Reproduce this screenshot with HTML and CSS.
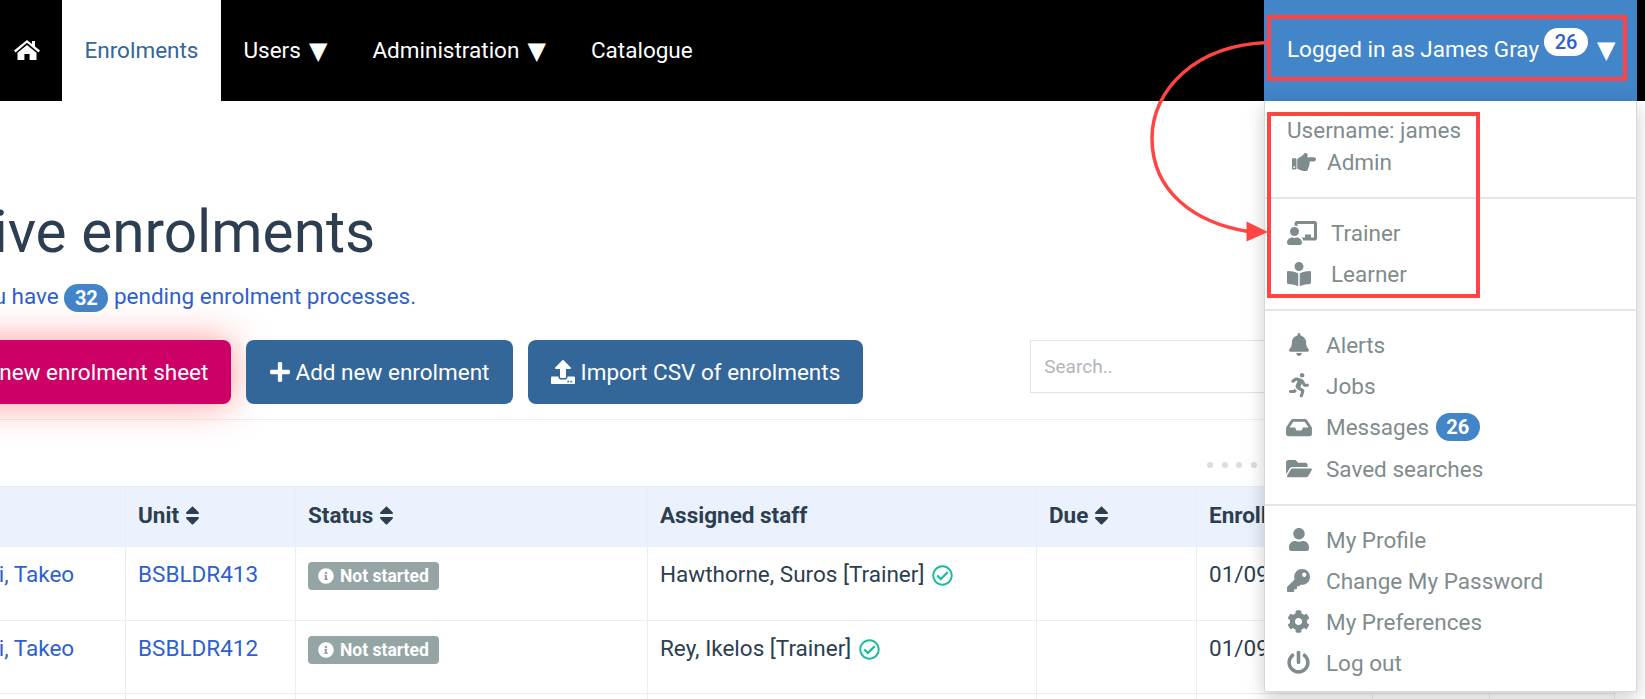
FILE: index.html
```html
<!DOCTYPE html>
<html lang="en">
<head>
<meta charset="utf-8">
<title>Active enrolments</title>
<link rel="stylesheet" href="styles.css">
</head>
<body>
<svg class="sprite" width="0" height="0" aria-hidden="true">
  <symbol id="i-point" viewBox="0 0 512 512"><path d="M512 199.652c0 23.625-20.65 43.826-44.8 43.826h-99.851c16.34 17.048 18.346 49.766-6.299 70.944 14.288 22.829 2.147 53.017-16.45 62.315C353.574 425.878 322.654 448 272 448c-2.746 0-13.276-.203-16-.195-61.971.168-76.894-31.065-123.731-38.315C120.596 407.683 112 397.599 112 385.786V214.261l.002-.001c.011-18.366 10.607-35.889 28.464-43.845 28.886-12.994 95.413-49.038 107.534-77.323 7.797-18.194 21.384-29.084 40-29.092 34.222-.014 57.752 35.098 44.119 66.908-3.583 8.359-8.312 16.67-14.153 24.918H467.2c23.45 0 44.8 20.543 44.8 43.826zM96 200v192c0 13.255-10.745 24-24 24H24c-13.255 0-24-10.745-24-24V200c0-13.255 10.745-24 24-24h48c13.255 0 24 10.745 24 24zM68 368c0-11.046-8.954-20-20-20s-20 8.954-20 20 8.954 20 20 20 20-8.954 20-20z"/></symbol>
  <symbol id="i-teacher" viewBox="0 0 640 512"><path d="M208 352c-2.39 0-4.78.35-7.06 1.09C187.98 357.3 174.35 360 160 360c-14.35 0-27.98-2.7-40.95-6.91-2.28-.74-4.66-1.09-7.05-1.09C49.94 352-.33 402.48 0 464.62.14 490.88 21.73 512 48 512h224c26.27 0 47.86-21.12 48-47.38.33-62.14-49.94-112.62-112-112.62zm-48-32c53.02 0 96-42.98 96-96s-42.98-96-96-96-96 42.98-96 96 42.98 96 96 96zM592 0H208c-26.47 0-48 22.25-48 49.59V96c23.42 0 45.1 6.78 64 17.8V64h352v288h-64v-64H384v64h-76.24c19.1 16.69 33.12 38.73 39.69 64H592c26.47 0 48-22.25 48-49.59V49.59C640 22.25 618.47 0 592 0z"/></symbol>
  <symbol id="i-reader" viewBox="0 0 512 512"><path d="M352 96c0-53.02-42.98-96-96-96s-96 42.98-96 96 42.98 96 96 96 96-42.98 96-96zM233.59 241.1c-59.33-36.32-155.43-46.3-203.79-49.05C13.55 191.13 0 203.51 0 219.14v222.8c0 14.33 11.59 26.28 26.49 27.05 43.66 2.29 131.99 10.68 193.04 41.43 9.37 4.72 20.48-1.71 20.48-11.87V252.56c-.01-4.67-2.32-8.95-6.42-11.46zm248.61-49.05c-48.35 2.74-144.46 12.73-203.78 49.05-4.1 2.51-6.41 6.96-6.41 11.63v245.79c0 10.19 11.14 16.63 20.54 11.9 61.04-30.72 149.32-39.11 192.97-41.4 14.9-.78 26.49-12.73 26.49-27.06V219.14c-.01-15.63-13.56-28.01-29.81-27.09z"/></symbol>
  <symbol id="i-bell" viewBox="0 0 448 512"><path d="M224 512c35.32 0 63.97-28.65 63.97-64H160.03c0 35.35 28.65 64 63.97 64zm215.39-149.71c-19.32-20.76-55.47-51.99-55.47-154.29 0-77.7-54.48-139.9-127.94-155.16V32c0-17.67-14.32-32-31.98-32s-31.98 14.33-31.98 32v20.84C118.56 68.1 64.08 130.3 64.08 208c0 102.3-36.15 133.53-55.47 154.29-6 6.45-8.66 14.16-8.61 21.71.11 16.4 12.98 32 32.1 32h383.8c19.12 0 32-15.6 32.1-32 .05-7.55-2.61-15.27-8.61-21.71z"/></symbol>
  <symbol id="i-run" viewBox="0 0 416 512"><path d="M272 96c26.51 0 48-21.49 48-48S298.51 0 272 0s-48 21.49-48 48 21.49 48 48 48zM113.69 317.47l-14.8 34.52H32c-17.67 0-32 14.33-32 32s14.33 32 32 32h77.45c19.25 0 36.58-11.44 44.11-29.09l8.79-20.52-10.67-6.3c-17.32-10.23-30.06-25.37-37.99-42.61zM384 223.99h-44.03l-26.06-53.25c-12.5-25.55-35.45-44.23-61.78-50.94l-71.08-21.14c-28.3-6.8-57.77-.55-80.84 17.14l-39.67 30.41c-14.03 10.75-16.69 30.83-5.92 44.86s30.84 16.66 44.86 5.92l39.69-30.41c7.67-5.89 17.44-8 25.27-6.14l14.7 4.37-37.46 87.39c-12.62 29.48-1.31 64.01 26.3 80.31l84.98 50.17-27.47 87.73c-5.28 16.86 4.11 34.81 20.97 40.09 3.19 1 6.41 1.48 9.58 1.48 13.61 0 26.23-8.77 30.52-22.45l31.64-101.06c5.91-20.77-2.89-43.08-21.64-54.39l-61.24-36.14 31.31-78.28 20.27 41.43c8 16.34 24.92 26.89 43.11 26.89H384c17.67 0 32-14.33 32-32s-14.33-31.99-32-31.99z"/></symbol>
  <symbol id="i-inbox" viewBox="0 0 576 512"><path d="M567.938 243.908L462.25 85.374A48.003 48.003 0 0 0 422.311 64H153.689a48 48 0 0 0-39.938 21.374L8.062 243.908A47.994 47.994 0 0 0 0 270.533V400c0 26.51 21.49 48 48 48h480c26.51 0 48-21.49 48-48V270.533a47.994 47.994 0 0 0-8.062-26.625zM162.252 128h251.497l85.333 128H376l-32 64H232l-32-64H76.918l85.334-128z"/></symbol>
  <symbol id="i-folder" viewBox="0 0 576 512"><path d="M572.694 292.093L500.27 416.248A63.997 63.997 0 0 1 444.989 448H45.025c-18.523 0-30.064-20.093-20.731-36.093l72.424-124.155A64 64 0 0 1 152 256h399.964c18.523 0 30.064 20.093 20.73 36.093zM152 224h328v-48c0-26.51-21.49-48-48-48H272l-64-64H48C21.49 64 0 85.49 0 112v278.046l69.077-118.418C86.214 242.25 117.989 224 152 224z"/></symbol>
  <symbol id="i-user" viewBox="0 0 448 512"><path d="M224 256c70.7 0 128-57.3 128-128S294.7 0 224 0 96 57.3 96 128s57.3 128 128 128zm89.6 32h-16.7c-22.2 10.2-46.9 16-72.9 16s-50.6-5.8-72.9-16h-16.7C60.2 288 0 348.2 0 422.4V464c0 26.5 21.5 48 48 48h352c26.5 0 48-21.5 48-48v-41.6c0-74.2-60.2-134.4-134.4-134.4z"/></symbol>
  <symbol id="i-key" viewBox="0 0 512 512"><path d="M512 176.001C512 273.203 433.202 352 336 352c-11.22 0-22.19-1.062-32.827-3.069l-24.012 27.014A23.999 23.999 0 0 1 261.223 384H224v40c0 13.255-10.745 24-24 24h-40v40c0 13.255-10.745 24-24 24H24c-13.255 0-24-10.745-24-24v-78.059c0-6.365 2.529-12.47 7.029-16.971l161.802-161.802C163.108 213.814 160 195.271 160 176 160 78.798 238.797.001 335.999 0 433.488-.001 512 78.511 512 176.001zM336 128c0 26.51 21.49 48 48 48s48-21.49 48-48-21.49-48-48-48-48 21.49-48 48z"/></symbol>
  <symbol id="i-cog" viewBox="0 0 512 512"><path d="M487.4 315.7l-42.6-24.6c4.3-23.2 4.3-47 0-70.2l42.6-24.6c4.9-2.8 7.1-8.6 5.5-14-11.1-35.6-30-67.8-54.7-94.6-3.8-4.1-10-5.1-14.8-2.3L380.8 110c-17.9-15.4-38.5-27.3-60.8-35.1V25.8c0-5.6-3.9-10.5-9.4-11.7-36.7-8.2-74.3-7.8-109.2 0-5.5 1.2-9.4 6.1-9.4 11.7V75c-22.2 7.9-42.8 19.8-60.8 35.1L88.7 85.5c-4.9-2.8-11-1.9-14.8 2.3-24.7 26.7-43.6 58.9-54.7 94.6-1.7 5.4.6 11.2 5.5 14L67.3 221c-4.3 23.2-4.3 47 0 70.2l-42.6 24.6c-4.9 2.8-7.1 8.6-5.5 14 11.1 35.6 30 67.8 54.7 94.6 3.8 4.1 10 5.1 14.8 2.3l42.6-24.6c17.9 15.4 38.5 27.3 60.8 35.1v49.2c0 5.6 3.9 10.5 9.4 11.7 36.7 8.2 74.3 7.8 109.2 0 5.5-1.2 9.4-6.1 9.4-11.7v-49.2c22.2-7.9 42.8-19.8 60.8-35.1l42.6 24.6c4.9 2.8 11 1.9 14.8-2.3 24.7-26.7 43.6-58.9 54.7-94.6 1.5-5.5-.7-11.3-5.6-14.1zM256 336c-44.1 0-80-35.9-80-80s35.9-80 80-80 80 35.9 80 80-35.9 80-80 80z"/></symbol>
  <symbol id="i-power" viewBox="0 0 512 512"><path d="M400 54.1c63 45 104 118.6 104 201.9 0 136.8-110.8 247.7-247.5 248C120 504.3 8.2 393 8 256.4 7.9 173.1 48.9 99.3 111.8 54.2c11.7-8.3 28-4.8 35 7.7L162.6 90c5.9 10.5 3.1 23.8-6.6 31-41.5 30.8-68 79.6-68 134.9-.1 92.3 74.5 168.1 168 168.1 91.6 0 168.6-74.2 168-169.1-.3-51.8-24.7-101.8-68.1-134-9.7-7.2-12.4-20.5-6.5-30.9l15.8-28.1c7-12.4 23.2-16.1 34.8-7.8zM296 264V24c0-13.3-10.7-24-24-24h-32c-13.3 0-24 10.7-24 24v240c0 13.3 10.7 24 24 24h32c13.3 0 24-10.7 24-24z"/></symbol>
  <symbol id="i-plus" viewBox="0 0 448 512"><path d="M416 208H272V64c0-17.67-14.33-32-32-32h-32c-17.67 0-32 14.33-32 32v144H32c-17.67 0-32 14.33-32 32v32c0 17.67 14.33 32 32 32h144v144c0 17.67 14.33 32 32 32h32c17.67 0 32-14.33 32-32V304h144c17.67 0 32-14.33 32-32v-32c0-17.67-14.33-32-32-32z"/></symbol>
  <symbol id="i-upload" viewBox="0 0 512 512"><path d="M296 384h-80c-13.3 0-24-10.7-24-24V192h-87.7c-17.8 0-26.7-21.5-14.1-34.1L242.3 5.7c7.5-7.5 19.8-7.5 27.3 0l152.2 152.2c12.6 12.6 3.7 34.1-14.1 34.1H320v168c0 13.3-10.7 24-24 24zm216-8v112c0 13.3-10.7 24-24 24H24c-13.3 0-24-10.7-24-24V376c0-13.3 10.7-24 24-24h136v8c0 30.9 25.1 56 56 56h80c30.9 0 56-25.1 56-56v-8h136c13.3 0 24 10.7 24 24zm-124 88c0-11-9-20-20-20s-20 9-20 20 9 20 20 20 20-9 20-20zm64 0c0-11-9-20-20-20s-20 9-20 20 9 20 20 20 20-9 20-20z"/></symbol>
  <symbol id="i-info" viewBox="0 0 512 512"><path d="M256 8C119.043 8 8 119.083 8 256c0 136.997 111.043 248 248 248s248-111.003 248-248C504 119.083 392.957 8 256 8zm0 110c23.196 0 42 18.804 42 42s-18.804 42-42 42-42-18.804-42-42 18.804-42 42-42zm56 254c0 6.627-5.373 12-12 12h-88c-6.627 0-12-5.373-12-12v-24c0-6.627 5.373-12 12-12h12v-64h-12c-6.627 0-12-5.373-12-12v-24c0-6.627 5.373-12 12-12h64c6.627 0 12 5.373 12 12v100h12c6.627 0 12 5.373 12 12v24z"/></symbol>
  <symbol id="i-sort" viewBox="0 0 320 512"><path d="M41 288h238c21.4 0 32.1 25.9 17 41L177 448c-9.4 9.4-24.6 9.4-33.9 0L24 329c-15.1-15.1-4.4-41 17-41zm255-105L177 64c-9.4-9.4-24.6-9.4-33.9 0L24 183c-15.1 15.1-4.4 41 17 41h238c21.4 0 32.1-25.9 17-41z"/></symbol>
  <symbol id="i-check" viewBox="0 0 512 512"><path d="M256 8C119.033 8 8 119.033 8 256s111.033 248 248 248 248-111.033 248-248S392.967 8 256 8zm0 48c110.532 0 200 89.451 200 200 0 110.532-89.451 200-200 200-110.532 0-200-89.451-200-200 0-110.532 89.451-200 200-200m140.204 130.267l-22.536-22.718c-4.667-4.705-12.265-4.736-16.97-.068L215.346 303.697l-59.792-60.277c-4.667-4.705-12.265-4.736-16.97-.069l-22.719 22.536c-4.705 4.667-4.736 12.265-.068 16.971l90.781 91.516c4.667 4.705 12.265 4.736 16.97.068l172.589-171.204c4.704-4.668 4.734-12.266.067-16.971z"/></symbol>
</svg>

<nav class="topnav">
  <a class="nav-home" href="#" aria-label="Home">
    <svg class="home-icon" viewBox="0 0 26 21"><path d="M13 1 L18 5 V2 H21 V7.4 L26 11.6 L24.4 13.4 L13 3.8 L1.6 13.4 L0 11.6 Z"/><path d="M13 6 L22.5 13.8 V21 H15.6 V15 H10.4 V21 H3.5 V13.8 Z"/></svg>
  </a>
  <a class="nav-link is-active" href="#">Enrolments</a>
  <a class="nav-link" href="#">Users <span class="caret">▼</span></a>
  <a class="nav-link" href="#">Administration <span class="caret">▼</span></a>
  <a class="nav-link" href="#">Catalogue</a>
  <div class="nav-user">
    <a class="user-toggle" href="#">
      <span>Logged in as James Gray</span>
      <span class="pill pill-white">26</span>
      <span class="caret caret-user">▼</span>
    </a>
    <div class="user-menu">
      <div class="callout"></div>
      <div class="menu-group group-id">
        <div class="username">Username: james</div>
        <a class="role role-admin" href="#"><svg class="ic ic-point"><use href="#i-point"/></svg>Admin</a>
      </div>
      <div class="menu-group group-roles">
        <a class="role role-trainer" href="#"><svg class="ic ic-teacher"><use href="#i-teacher"/></svg>Trainer</a>
        <a class="role role-learner" href="#"><svg class="ic ic-reader"><use href="#i-reader"/></svg>Learner</a>
      </div>
      <div class="menu-group group-tools">
        <a class="item" href="#"><span class="ic-box"><svg class="ic ic-20"><use href="#i-bell"/></svg></span>Alerts</a>
        <a class="item" href="#"><span class="ic-box"><svg class="ic ic-run"><use href="#i-run"/></svg></span>Jobs</a>
        <a class="item item-msg" href="#"><span class="ic-box"><svg class="ic ic-wide"><use href="#i-inbox"/></svg></span>Messages <span class="pill pill-blue pill-menu">26</span></a>
        <a class="item" href="#"><span class="ic-box"><svg class="ic ic-wide"><use href="#i-folder"/></svg></span>Saved searches</a>
      </div>
      <div class="menu-group group-last">
        <a class="item" href="#"><span class="ic-box"><svg class="ic ic-20"><use href="#i-user"/></svg></span>My Profile</a>
        <a class="item" href="#"><span class="ic-box"><svg class="ic ic-24"><use href="#i-key"/></svg></span>Change My Password</a>
        <a class="item" href="#"><span class="ic-box"><svg class="ic ic-24"><use href="#i-cog"/></svg></span>My Preferences</a>
        <a class="item" href="#"><span class="ic-box"><svg class="ic ic-24"><use href="#i-power"/></svg></span>Log out</a>
      </div>
    </div>
  </div>
</nav>

<main class="content">
  <h1 class="title">Active enrolments</h1>
  <p class="lead">You have <span class="pill pill-blue">32</span> pending enrolment processes.</p>
  <div class="toolbar">
    <a class="btn btn-pink" href="#"><svg class="btn-ic"><use href="#i-plus"/></svg> Add new enrolment sheet</a>
    <a class="btn btn-blue btn-add" href="#"><svg class="btn-ic"><use href="#i-plus"/></svg> Add new enrolment</a>
    <a class="btn btn-blue" href="#"><svg class="btn-ic btn-ic-up"><use href="#i-upload"/></svg> Import CSV of enrolments</a>
    <input class="search" type="text" placeholder="Search..">
  </div>
  <div class="dots"><i></i><i></i><i></i><i></i></div>
  <table class="grid">
    <colgroup>
      <col class="c1"><col class="c2"><col class="c3"><col class="c4"><col class="c5"><col class="c6"><col class="c7"><col class="c8">
    </colgroup>
    <thead>
      <tr>
        <th></th>
        <th>Unit <svg class="sort"><use href="#i-sort"/></svg></th>
        <th>Status <svg class="sort"><use href="#i-sort"/></svg></th>
        <th>Assigned staff</th>
        <th>Due <svg class="sort"><use href="#i-sort"/></svg></th>
        <th>Enrolled</th>
        <th></th>
        <th></th>
      </tr>
    </thead>
    <tbody>
      <tr>
        <td class="learner"><a href="#">Kawasaki, Takeo</a></td>
        <td><a href="#">BSBLDR413</a></td>
        <td><span class="status"><svg class="status-ic"><use href="#i-info"/></svg>Not started</span></td>
        <td>Hawthorne, Suros [Trainer] <svg class="ok"><use href="#i-check"/></svg></td>
        <td></td>
        <td>01/09/2021</td>
        <td></td>
        <td></td>
      </tr>
      <tr class="row-b">
        <td class="learner"><a href="#">Kawasaki, Takeo</a></td>
        <td><a href="#">BSBLDR412</a></td>
        <td><span class="status"><svg class="status-ic"><use href="#i-info"/></svg>Not started</span></td>
        <td>Rey, Ikelos [Trainer] <svg class="ok"><use href="#i-check"/></svg></td>
        <td></td>
        <td>01/09/2021</td>
        <td></td>
        <td></td>
      </tr>
      <tr>
        <td></td><td></td><td></td><td></td><td></td><td></td><td></td><td></td>
      </tr>
    </tbody>
  </table>
</main>

<svg class="annot" viewBox="0 0 1645 699" aria-hidden="true">
  <path class="annot-line" d="M1268 42.5 C1195 45 1152 90 1152 138 C1152 192 1195 223 1248 231.5"/>
  <path class="annot-head" d="M1246.5 221.5 L1268 232 L1246.5 241.5 Z"/>
</svg>
</body>
</html>
```

FILE: styles.css
```css
* { box-sizing: border-box; }
html, body { margin: 0; height: 699px; overflow: hidden; }
body {
  position: relative;
  font-family: Roboto, "Liberation Sans", sans-serif;
  font-size: 22.5px;
  color: #2c3e50;
  background: #fff;
}
a { text-decoration: none; color: inherit; }
.sprite { position: absolute; }

/* top nav */
.topnav {
  position: relative;
  z-index: 5;
  display: flex;
  height: 101px;
  background: #000;
  color: #fff;
}
.nav-home { display: flex; align-items: center; width: 62px; padding-left: 14px; padding-bottom: 2px; }
.home-icon { width: 26px; height: 21px; fill: #fff; }
.nav-link { display: flex; align-items: center; padding: 0 22.5px 2px; white-space: pre; }
.nav-link.is-active { background: #fff; color: #336699; }
.caret { margin-left: 2.5px; padding-top: 2px; font-family: "DejaVu Sans", sans-serif; font-size: 24px; line-height: 1; }
.caret-user { margin-left: 0; }

.nav-user { position: relative; width: 373px; margin-left: auto; margin-right: 8px; background: #4285c8; }
.user-toggle {
  display: flex;
  align-items: center;
  height: 66px;
  margin: 15px 10px 0 3px;
  padding: 2px 0 0 16px;
  border: 4px solid #ff4444;
}
.pill {
  display: inline-block;
  min-width: 44px;
  height: 28px;
  padding: 0 10px;
  border-radius: 14px;
  font-size: 20px;
  font-weight: 700;
  line-height: 28px;
  text-align: center;
}
.pill-white { background: #fff; color: #2e5fcf; margin: 0 9px 14px 5px; font-weight: 500; }
.pill-blue { background: #4285c8; color: #fff; vertical-align: -1px; }

/* user menu */
.user-menu {
  position: absolute;
  top: 100%;
  left: 0;
  width: 373px;
  height: 591px;
  background: #fff;
  border: 1px solid #d8d8d8;
  border-top: 0;
  box-shadow: 0 6px 18px rgba(0,0,0,.2);
  color: #7f8c8d;
}
.callout {
  position: absolute;
  left: 2px;
  top: 11px;
  width: 213px;
  height: 186px;
  border: 4px solid #ff4444;
  z-index: 1;
}
.menu-group { border-bottom: 2px solid #e5e5e5; }
.group-id { height: 98px; padding: 13px 0 0 22px; }
.group-roles { padding: 13px 0 15px; }
.group-tools { padding: 13px 0 15px; }
.group-last { border-bottom: 0; padding-top: 13px; }
.username { height: 32px; line-height: 32px; }
.role, .item { display: flex; align-items: center; height: 41px; white-space: pre; }
.item-msg { height: 42px; }
.role-admin { height: 32px; padding-left: 5px; }
.ic { fill: #7f8c8d; flex: none; }
.ic-point { width: 24px; height: 24px; margin-right: 11px; }
.role-trainer { padding-left: 22px; }
.ic-teacher { width: 30px; height: 24px; margin-right: 14px; }
.role-learner { padding-left: 22px; }
.ic-reader { width: 24px; height: 24px; margin-right: 20px; }
.item { padding-left: 19px; }
.ic-box { display: flex; justify-content: center; width: 29px; margin-right: 13px; }
.ic-20 { width: 20px; height: 23px; }
.ic-run { width: 20px; height: 24.6px; }
.ic-24 { width: 23px; height: 23px; }
.ic-wide { width: 26px; height: 23px; }
.pill-menu { margin-left: 1px; }

/* main */
.content { width: 1714px; margin-left: -100px; }
.title {
  margin: 0;
  padding: 97px 0 0 5.5px;
  font-size: 58.5px;
  font-weight: 400;
  line-height: 68px;
}
.lead { margin: 14px 0 0 68px; color: #2e5fcf; line-height: 32px; height: 32px; }
.toolbar {
  display: flex;
  align-items: flex-start;
  gap: 15px;
  margin-top: 28px;
  padding-left: 5px;
  height: 80px;
  border-bottom: 1px solid #eee;
}
.btn {
  display: flex;
  align-items: center;
  height: 64px;
  padding: 0 23px;
  border-radius: 8px;
  color: #fff;
  white-space: pre;
}
.btn-pink { background: #cc0066; box-shadow: 0 0 36px rgba(255,50,50,.5); }
.btn-blue { background: #336699; }
.btn-add { padding: 0 23.5px; }
.btn-ic { width: 20px; height: 24px; fill: #fff; }
.btn-ic-up { width: 24px; }
.search {
  width: 400px;
  height: 53px;
  margin-left: 152px;
  padding: 0 13px 1px;
  border: 1px solid #dde4ee;
  font: 19px Roboto, sans-serif;
}
.search::placeholder { color: #b0b6be; }
.dots { display: flex; gap: 8.7px; height: 6px; margin: 42px 0 18px 1307px; }
.dots i { width: 6px; height: 6px; border-radius: 50%; background: #dcdcdc; }

/* table */
.grid { width: 1714px; table-layout: fixed; border-collapse: collapse; }
.c1 { width: 225px; } .c2 { width: 170px; } .c3 { width: 352px; } .c4 { width: 389px; }
.c5 { width: 160px; } .c6 { width: 176px; } .c7 { width: 117px; } .c8 { width: 125px; }
.grid th, .grid td { border: 1px solid #eaeef2; padding: 0 12px; white-space: nowrap; overflow: hidden; }
.grid th { height: 60px; padding-bottom: 3px; background: #ebf2fd; font-weight: 700; text-align: left; }
.grid td { height: 74px; vertical-align: top; padding-top: 13px; line-height: 28px; }
.grid .learner { padding-left: 7px; }
.grid .row-b td { height: 73px; }
.grid td a { color: #2e5fcf; }
.sort { width: 15px; height: 23px; fill: #2c3e50; vertical-align: -4px; }
.status {
  display: inline-flex;
  align-items: center;
  gap: 6px;
  height: 28px;
  margin-top: 2px;
  padding: 0 10.5px 0 10px;
  border-radius: 4px;
  background: #95a5a6;
  color: #fff;
  font-size: 17.5px;
  font-weight: 700;
  vertical-align: top;
}
.status-ic { width: 16px; height: 16px; fill: #fff; }
.ok { width: 21px; height: 21px; fill: #1abc9c; vertical-align: -4px; margin-left: 2px; }

/* annotation */
.annot { position: absolute; inset: 0; width: 1645px; height: 699px; z-index: 6; pointer-events: none; }
.annot-line { fill: none; stroke: #ff4444; stroke-width: 3.5; }
.annot-head { fill: #ff4444; }
```
